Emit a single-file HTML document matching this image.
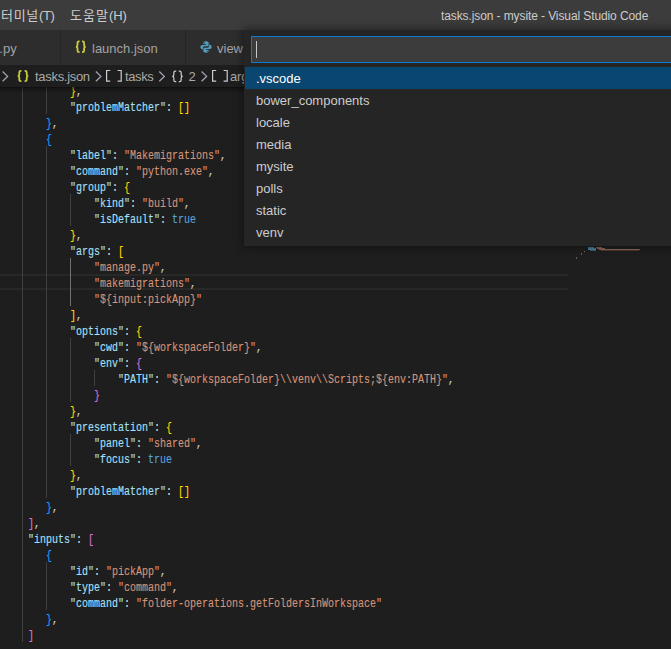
<!DOCTYPE html>
<html lang="ko">
<head>
<meta charset="utf-8">
<title>tasks.json - mysite - Visual Studio Code</title>
<style>
html,body{margin:0;padding:0;}
body{width:671px;height:649px;overflow:hidden;background:#1e1e1e;position:relative;
  font-family:"Liberation Sans","Noto Sans CJK KR","NanumGothic",sans-serif;font-size:13px;color:#cccccc;}
#titlebar{position:absolute;left:0;top:0;width:671px;height:30px;background:#3c3c3c;}
#titlebar .menu{position:absolute;top:1px;height:30px;line-height:30px;font-size:13px;color:#cccccc;white-space:nowrap;}
#titlebar .title{position:absolute;top:1px;height:30px;line-height:30px;left:441px;font-size:12px;letter-spacing:-0.1px;color:#cccccc;white-space:nowrap;}
#tabs{position:absolute;left:0;top:30px;width:671px;height:35px;background:#252526;}
.tab{position:absolute;top:0;height:35px;background:#2d2d2d;border-right:1px solid #252526;box-sizing:border-box;}
.tab .lbl{position:absolute;top:1px;line-height:35px;font-size:13px;color:#a3a3a3;white-space:nowrap;}
.tab .ico{position:absolute;top:0;line-height:35px;font-size:13px;white-space:nowrap;}
#crumbs{position:absolute;left:0;top:65px;width:671px;height:22px;background:#1e1e1e;z-index:3;}
#crumbs svg{position:absolute;left:0;top:0;}
#crumbs span{position:absolute;top:1px;line-height:22px;font-size:13px;color:#a9a9a9;white-space:nowrap;}
#editor{position:absolute;left:0;top:0;width:671px;height:649px;}
#shadow{position:absolute;left:0;top:87px;width:671px;height:6px;box-shadow:inset 0 6px 6px -6px #000;z-index:2;}
#minimap div{position:absolute;height:1px;}
.ln{position:absolute;height:16px;line-height:16px;font-family:"Liberation Mono","DejaVu Sans Mono",monospace;font-size:12.5px;
  white-space:pre;transform:scaleX(0.8);-webkit-text-stroke:0.12px;transform-origin:0 0;color:#d4d4d4;}
.k{color:#a2e0ff}.s{color:#d4957b}.p{color:#d8d8d8}.t{color:#5aa2de}
.b1{color:#ffd700}.b2{color:#da70d6}.b3{color:#179fff}
.g{position:absolute;width:1px;background:#404040;}
.ga{background:#707070;}
#curline{position:absolute;left:0;top:274px;width:568px;height:16px;box-sizing:border-box;border-top:2px solid #282828;border-bottom:2px solid #282828;}
#qp{position:absolute;left:244px;top:30px;width:601px;height:216px;background:#252526;box-shadow:0 0 8px 2px rgba(0,0,0,0.36);z-index:5;}
#qp .inp{position:absolute;left:7px;top:6px;width:588px;height:27px;box-sizing:border-box;background:#3c3c3c;border:1px solid #0e7ad3;}
#qp .caret{position:absolute;left:12px;top:11px;width:1px;height:17px;background:#c8c8c8;}
#qp .row{position:absolute;left:1px;width:600px;height:22px;line-height:24px;padding-left:11px;box-sizing:border-box;font-size:13px;color:#cccccc;white-space:nowrap;}
#qp .sel{background:#094771;color:#ffffff;}
</style>
</head>
<body>
<div id="editor">
<div id="curline"></div>
<div class="g " style="left:22px;top:82px;height:560px"></div>
<div class="g " style="left:46px;top:82px;height:32px"></div>
<div class="g " style="left:46px;top:146px;height:352px"></div>
<div class="g " style="left:70px;top:194px;height:32px"></div>
<div class="g ga" style="left:70px;top:258px;height:48px"></div>
<div class="g " style="left:70px;top:338px;height:64px"></div>
<div class="g " style="left:94px;top:370px;height:16px"></div>
<div class="g " style="left:70px;top:434px;height:32px"></div>
<div class="g " style="left:46px;top:562px;height:48px"></div>
<div class="ln" style="top:83.5px;left:70px"><span class="b1">}</span><span class="p">,</span></div>
<div class="ln" style="top:99.5px;left:70px"><span class="k">&quot;problemMatcher&quot;</span><span class="p">: </span><span class="b1">[]</span></div>
<div class="ln" style="top:115.5px;left:46px"><span class="b3">}</span><span class="p">,</span></div>
<div class="ln" style="top:131.5px;left:46px"><span class="b3">{</span></div>
<div class="ln" style="top:147.5px;left:70px"><span class="k">&quot;label&quot;</span><span class="p">: </span><span class="s">&quot;Makemigrations&quot;</span><span class="p">,</span></div>
<div class="ln" style="top:163.5px;left:70px"><span class="k">&quot;command&quot;</span><span class="p">: </span><span class="s">&quot;python.exe&quot;</span><span class="p">,</span></div>
<div class="ln" style="top:179.5px;left:70px"><span class="k">&quot;group&quot;</span><span class="p">: </span><span class="b1">{</span></div>
<div class="ln" style="top:195.5px;left:94px"><span class="k">&quot;kind&quot;</span><span class="p">: </span><span class="s">&quot;build&quot;</span><span class="p">,</span></div>
<div class="ln" style="top:211.5px;left:94px"><span class="k">&quot;isDefault&quot;</span><span class="p">: </span><span class="t">true</span></div>
<div class="ln" style="top:227.5px;left:70px"><span class="b1">}</span><span class="p">,</span></div>
<div class="ln" style="top:243.5px;left:70px"><span class="k">&quot;args&quot;</span><span class="p">: </span><span class="b1">[</span></div>
<div class="ln" style="top:259.5px;left:94px"><span class="s">&quot;manage.py&quot;</span><span class="p">,</span></div>
<div class="ln" style="top:275.5px;left:94px"><span class="s">&quot;makemigrations&quot;</span><span class="p">,</span></div>
<div class="ln" style="top:291.5px;left:94px"><span class="s">&quot;${input:pickApp}&quot;</span></div>
<div class="ln" style="top:307.5px;left:70px"><span class="b1">]</span><span class="p">,</span></div>
<div class="ln" style="top:323.5px;left:70px"><span class="k">&quot;options&quot;</span><span class="p">: </span><span class="b1">{</span></div>
<div class="ln" style="top:339.5px;left:94px"><span class="k">&quot;cwd&quot;</span><span class="p">: </span><span class="s">&quot;${workspaceFolder}&quot;</span><span class="p">,</span></div>
<div class="ln" style="top:355.5px;left:94px"><span class="k">&quot;env&quot;</span><span class="p">: </span><span class="b2">{</span></div>
<div class="ln" style="top:371.5px;left:118px"><span class="k">&quot;PATH&quot;</span><span class="p">: </span><span class="s">&quot;${workspaceFolder}\\venv\\Scripts;${env:PATH}&quot;</span><span class="p">,</span></div>
<div class="ln" style="top:387.5px;left:94px"><span class="b2">}</span></div>
<div class="ln" style="top:403.5px;left:70px"><span class="b1">}</span><span class="p">,</span></div>
<div class="ln" style="top:419.5px;left:70px"><span class="k">&quot;presentation&quot;</span><span class="p">: </span><span class="b1">{</span></div>
<div class="ln" style="top:435.5px;left:94px"><span class="k">&quot;panel&quot;</span><span class="p">: </span><span class="s">&quot;shared&quot;</span><span class="p">,</span></div>
<div class="ln" style="top:451.5px;left:94px"><span class="k">&quot;focus&quot;</span><span class="p">: </span><span class="t">true</span></div>
<div class="ln" style="top:467.5px;left:70px"><span class="b1">}</span><span class="p">,</span></div>
<div class="ln" style="top:483.5px;left:70px"><span class="k">&quot;problemMatcher&quot;</span><span class="p">: </span><span class="b1">[]</span></div>
<div class="ln" style="top:499.5px;left:46px"><span class="b3">}</span><span class="p">,</span></div>
<div class="ln" style="top:515.5px;left:28px"><span class="b2">]</span><span class="p">,</span></div>
<div class="ln" style="top:531.5px;left:28px"><span class="k">&quot;inputs&quot;</span><span class="p">: </span><span class="b2">[</span></div>
<div class="ln" style="top:547.5px;left:46px"><span class="b3">{</span></div>
<div class="ln" style="top:563.5px;left:70px"><span class="k">&quot;id&quot;</span><span class="p">: </span><span class="s">&quot;pickApp&quot;</span><span class="p">,</span></div>
<div class="ln" style="top:579.5px;left:70px"><span class="k">&quot;type&quot;</span><span class="p">: </span><span class="s">&quot;command&quot;</span><span class="p">,</span></div>
<div class="ln" style="top:595.5px;left:70px"><span class="k">&quot;command&quot;</span><span class="p">: </span><span class="s">&quot;folder-operations.getFoldersInWorkspace&quot;</span></div>
<div class="ln" style="top:611.5px;left:46px"><span class="b3">}</span><span class="p">,</span></div>
<div class="ln" style="top:627.5px;left:28px"><span class="b2">]</span></div>
<div id="minimap">
<div style="left:588px;top:247px;width:6px;height:1px;background:#456d84"></div>
<div style="left:588px;top:248px;width:8px;height:2px;background:#4d7d98"></div>
<div style="left:590px;top:250px;width:6px;height:1px;background:#3c5c6e"></div>
<div style="left:596px;top:247px;width:6px;height:1px;background:#7d5c4a"></div>
<div style="left:597px;top:248px;width:8px;height:1px;background:#8a6450"></div>
<div style="left:599px;top:249px;width:41px;height:1px;background:#8d6651"></div>
<div style="left:601px;top:250px;width:38px;height:1px;background:#4a3a32"></div>
<div style="left:584px;top:251px;width:1px;height:1px;background:#707070"></div>
<div style="left:581px;top:253px;width:1px;height:2px;background:#606060"></div>
<div style="left:576px;top:257px;width:1px;height:2px;background:#606060"></div>
</div>
</div>
</div>
<div id="titlebar">
  <div class="menu" style="left:1px"><span style="letter-spacing:0.7px">터미널</span><span style="letter-spacing:-0.4px">(T)</span></div>
  <div class="menu" style="left:70px"><span style="letter-spacing:1px">도움말</span>(H)</div>
  <div class="title">tasks.json - mysite - Visual Studio Code</div>
</div>
<div id="tabs">
  <div class="tab" style="left:0;width:61px"><span class="lbl" style="left:-0.7px">.py</span></div>
  <div class="tab" style="left:61px;width:125px"><svg width="16" height="16" viewBox="0 0 16 16" style="position:absolute;left:11.6px;top:9px"><path d="M6.60 2.30 H6.00 Q4.50 2.30 4.50 3.80 V6.25 Q4.50 7.75 2.90 7.75 Q4.50 7.75 4.50 9.25 V11.70 Q4.50 13.20 6.00 13.20 H6.60 M9.00 2.30 H9.60 Q11.10 2.30 11.10 3.80 V6.25 Q11.10 7.75 12.70 7.75 Q11.10 7.75 11.10 9.25 V11.70 Q11.10 13.20 9.60 13.20 H9.00" fill="none" stroke="#cbcb41" stroke-width="1.8"/></svg><span class="lbl" style="left:31px">launch.json</span></div>
  <div class="tab" style="left:186px;width:125px"><svg width="16" height="16" viewBox="0 0 16 16" style="position:absolute;left:11.7px;top:9px"><g fill="#519aba"><path d="M7.8 2.3 C6.2 2.3 5.4 2.9 5.4 3.9 V5.3 H8.1 V5.9 H4.3 C3.1 5.9 2.4 6.8 2.4 8.1 C2.4 9.4 3.1 10.3 4.1 10.3 H5 V8.9 C5 7.9 5.8 7.2 6.8 7.2 H9.3 C10.1 7.2 10.7 6.6 10.7 5.8 V3.9 C10.7 2.9 9.6 2.3 7.8 2.3 Z M6.4 3.2 A0.55 0.55 0 1 1 6.4 4.3 A0.55 0.55 0 1 1 6.4 3.2 Z" fill-rule="evenodd"/><path d="M8.2 13.7 C9.8 13.7 10.6 13.1 10.6 12.1 V10.7 H7.9 V10.1 H11.7 C12.9 10.1 13.6 9.2 13.6 7.9 C13.6 6.6 12.9 5.7 11.9 5.7 H11 V7.1 C11 8.1 10.2 8.8 9.2 8.8 H6.7 C5.9 8.8 5.3 9.4 5.3 10.2 V12.1 C5.3 13.1 6.4 13.7 8.2 13.7 Z M9.6 12.8 A0.55 0.55 0 1 1 9.6 11.7 A0.55 0.55 0 1 1 9.6 12.8 Z" fill-rule="evenodd"/></g></svg><span class="lbl" style="left:31px">view</span></div>
</div>
<div id="crumbs">
  <svg width="671" height="22" viewBox="0 0 671 22"><polyline points="2.6,6.5 7.6,11.4 2.6,16.3" fill="none" stroke="#a0a5b0" stroke-width="1.3"/><polyline points="95.9,6.5 100.9,11.4 95.9,16.3" fill="none" stroke="#a0a5b0" stroke-width="1.3"/><polyline points="159.3,6.5 164.3,11.4 159.3,16.3" fill="none" stroke="#a0a5b0" stroke-width="1.3"/><polyline points="201.6,6.5 206.6,11.4 201.6,16.3" fill="none" stroke="#a0a5b0" stroke-width="1.3"/><path d="M21.40 5.90 H20.80 Q19.30 5.90 19.30 7.40 V9.55 Q19.30 11.05 17.70 11.05 Q19.30 11.05 19.30 12.55 V14.70 Q19.30 16.20 20.80 16.20 H21.40 M24.60 5.90 H25.20 Q26.70 5.90 26.70 7.40 V9.55 Q26.70 11.05 28.30 11.05 Q26.70 11.05 26.70 12.55 V14.70 Q26.70 16.20 25.20 16.20 H24.60" fill="none" stroke="#cbcb41" stroke-width="1.8"/><path d="M110.2 5.5 H106.6 V16.1 H110.2 M117.6 5.5 H121.2 V16.1 H117.6" fill="none" stroke="#cccccc" stroke-width="1.2"/><path d="M176.22 6.20 H175.42 Q173.82 6.20 173.82 7.80 V9.85 Q173.82 11.45 172.22 11.45 Q173.82 11.45 173.82 13.05 V15.10 Q173.82 16.70 175.42 16.70 H176.22 M178.78 6.20 H179.58 Q181.18 6.20 181.18 7.80 V9.85 Q181.18 11.45 182.78 11.45 Q181.18 11.45 181.18 13.05 V15.10 Q181.18 16.70 179.58 16.70 H178.78" fill="none" stroke="#cccccc" stroke-width="1.25"/><path d="M216.2 5.5 H212.6 V16.1 H216.2 M223.6 5.5 H227.2 V16.1 H223.6" fill="none" stroke="#cccccc" stroke-width="1.2"/></svg>
  <span style="left:35px;letter-spacing:-0.3px">tasks.json</span>
  <span style="left:125px;letter-spacing:-0.4px">tasks</span>
  <span style="left:188.5px">2</span>
  <span style="left:230px;letter-spacing:-0.2px">args</span>
</div>
<div id="shadow"></div>
<div id="qp">
  <div class="inp"></div>
  <div class="caret"></div>
  <div class="row sel" style="top:37px">.vscode</div>
<div class="row" style="top:59px">bower_components</div>
<div class="row" style="top:81px">locale</div>
<div class="row" style="top:103px">media</div>
<div class="row" style="top:125px">mysite</div>
<div class="row" style="top:147px">polls</div>
<div class="row" style="top:169px">static</div>
<div class="row" style="top:191px">venv</div>
</div>
</body>
</html>
